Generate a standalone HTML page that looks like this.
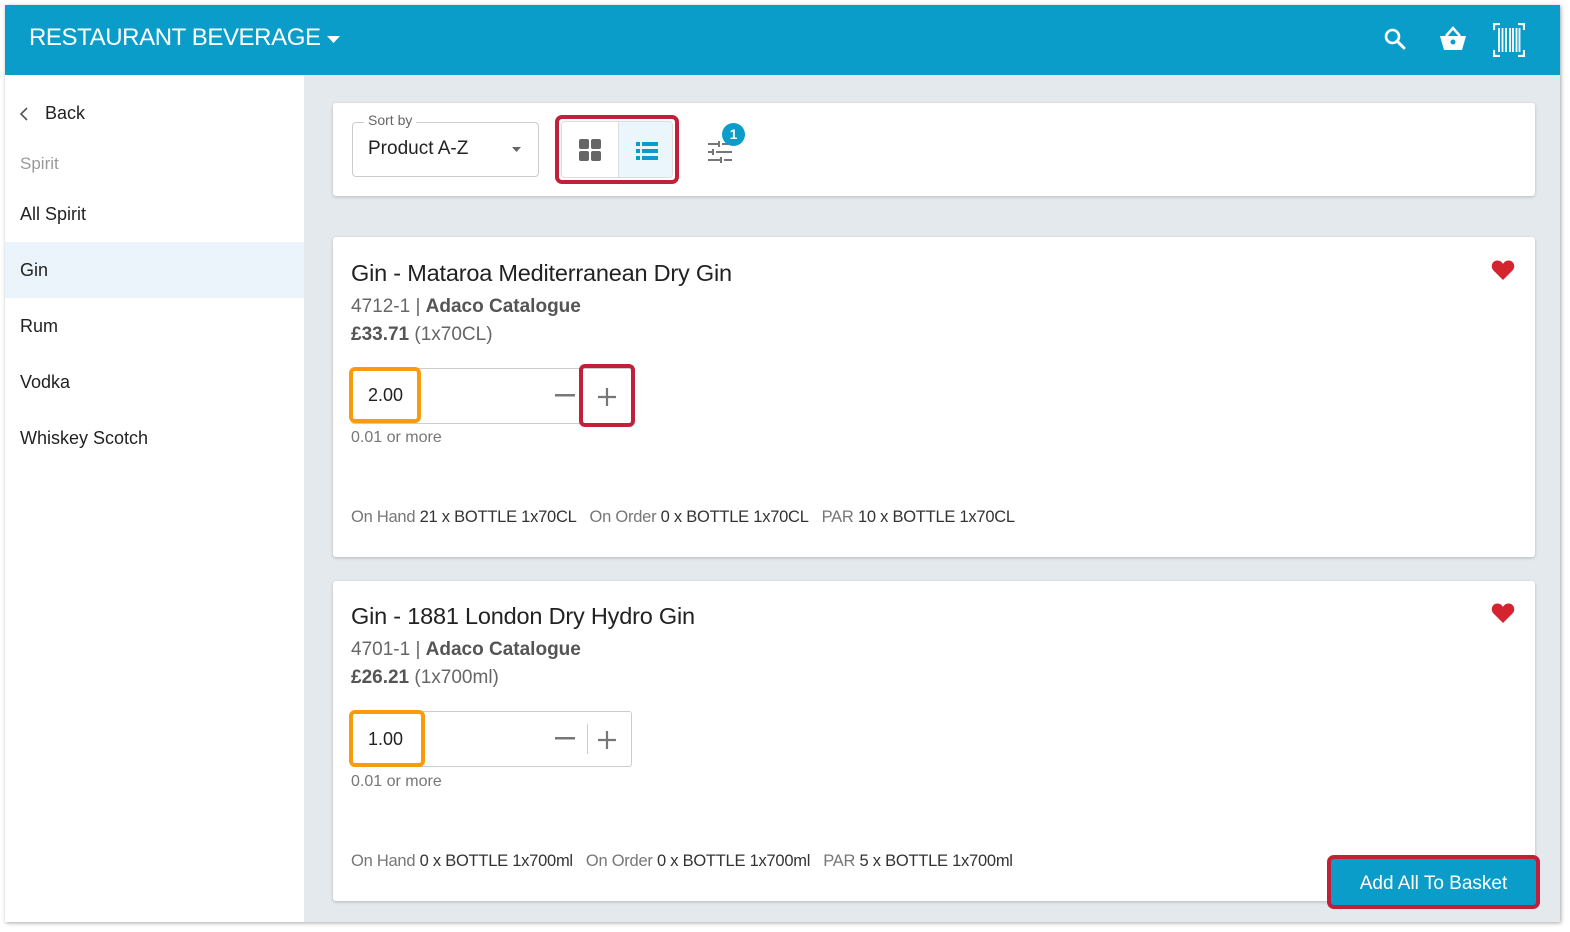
<!DOCTYPE html>
<html><head><meta charset="utf-8"><style>
*{box-sizing:border-box;margin:0;padding:0}
body{width:1570px;height:932px;background:#fff;font-family:"Liberation Sans",Arial,sans-serif;position:relative;overflow:hidden;color:#222}
.abs{position:absolute}
#frame{left:5px;top:5px;width:1555px;height:917px;background:#e4e9ed;box-shadow:1px 1px 4px rgba(0,0,0,.35);overflow:hidden}
#hdr{left:0;top:0;width:1555px;height:70px;background:#0b9dc9;color:#fff}
#side{left:0;top:70px;width:299px;height:847px;background:#fff}
.si{position:absolute;left:15px;font-size:18px;color:#222}
.card{position:absolute;background:#fff;border-radius:3px;box-shadow:0 1px 3px rgba(0,0,0,.2)}
.t{font-size:23.5px;color:#222;position:absolute;left:18px;letter-spacing:-0.2px}
.sub{font-size:19px;color:#666;position:absolute;left:18px}
.sub b{color:#555}
.qty{position:absolute;left:18px;width:281px;height:56px;border:1px solid #ccc;border-radius:3px}
.stock{position:absolute;left:18px;font-size:16.5px;color:#777;letter-spacing:-0.25px;white-space:nowrap}
.stock span{color:#333}
.hint{position:absolute;left:18px;font-size:16px;color:#777}
</style></head><body>
<div id="frame" class="abs">
 <div id="hdr" class="abs">
  <div class="abs" style="left:24px;top:19px;font-size:24px;letter-spacing:-0.4px;white-space:nowrap">RESTAURANT BEVERAGE</div>
  <svg class="abs" style="left:322px;top:31px" width="14" height="8"><path d="M0 0H13L6.5 7Z" fill="#fff"/></svg>
  <svg class="abs" style="left:1378px;top:22px" width="26" height="26" viewBox="0 0 26 26"><circle cx="9.5" cy="9.5" r="6.5" fill="none" stroke="#fff" stroke-width="2.6"/><path d="M14 14L21 21" stroke="#fff" stroke-width="3" stroke-linecap="round"/></svg>
  <svg class="abs" style="left:1433px;top:20px" width="30" height="28" viewBox="0 0 30 28"><path d="M8 11L15 3L22 11" fill="none" stroke="#fff" stroke-width="2.5"/><path d="M2 11H28L24 25H6Z" fill="#fff"/><circle cx="15" cy="17" r="2.5" fill="#0b9dc9"/></svg>
  <svg class="abs" style="left:1488px;top:18px" width="32" height="34" viewBox="0 0 32 34"><path d="M1 7V1H7M25 1H31V7M1 27V33H7M25 33H31V27" fill="none" stroke="#fff" stroke-width="2.2"/><path d="M6 5v24M9.5 5v24M13 5v24M17 5v24M20 5v24M23.5 5v24M26.5 5v24" stroke="#fff" stroke-width="1.8"/></svg>
 </div>
 <div id="side" class="abs">
  <svg class="abs" style="left:14px;top:31px" width="10" height="16"><path d="M8 2L2 8L8 14" fill="none" stroke="#555" stroke-width="1.6"/></svg>
  <div class="si" style="left:40px;top:28px">Back</div>
  <div class="si" style="top:79px;font-size:17px;color:#999">Spirit</div>
  <div class="si" style="top:129px">All Spirit</div>
  <div class="abs" style="left:0;top:167px;width:299px;height:56px;background:#eaf4fa"></div>
  <div class="si" style="top:185px">Gin</div>
  <div class="si" style="top:241px">Rum</div>
  <div class="si" style="top:297px">Vodka</div>
  <div class="si" style="top:353px">Whiskey Scotch</div>
 </div>
 <div class="card" style="left:328px;top:98px;width:1202px;height:93px">
  <div class="abs" style="left:19px;top:19px;width:187px;height:55px;border:1px solid #ccc;border-radius:4px"></div>
  <div class="abs" style="left:31px;top:9px;background:#fff;padding:0 4px;font-size:14px;color:#666">Sort by</div>
  <div class="abs" style="left:35px;top:35px;font-size:19px;color:#222">Product A-Z</div>
  <svg class="abs" style="left:179px;top:44px" width="10" height="6"><path d="M0 0H9L4.5 5Z" fill="#666"/></svg>
  <div class="abs" style="left:222px;top:12px;width:124px;height:69px;border:4px solid #c2203a;border-radius:7px"></div>
  <div class="abs" style="left:228px;top:18px;width:112px;height:57px;border:1px solid #ddd;border-radius:4px;overflow:hidden">
   <div class="abs" style="left:56px;top:0;width:56px;height:57px;background:#eaf5fc;border-left:1px solid #ddd"></div>
   <svg class="abs" style="left:17px;top:17px" width="22" height="22"><rect x="0" y="0" width="10" height="10" rx="2" fill="#666"/><rect x="12" y="0" width="10" height="10" rx="2" fill="#666"/><rect x="0" y="12" width="10" height="10" rx="2" fill="#666"/><rect x="12" y="12" width="10" height="10" rx="2" fill="#666"/></svg>
   <svg class="abs" style="left:74px;top:20px" width="22" height="18"><rect x="0" y="0" width="4" height="4" fill="#0b9dc9"/><rect x="6" y="0" width="16" height="4" fill="#0b9dc9"/><rect x="0" y="7" width="4" height="4" fill="#0b9dc9"/><rect x="6" y="7" width="16" height="4" fill="#0b9dc9"/><rect x="0" y="14" width="4" height="4" fill="#0b9dc9"/><rect x="6" y="14" width="16" height="4" fill="#0b9dc9"/></svg>
  </div>
  <svg class="abs" style="left:375px;top:38px" width="24" height="22"><path d="M0 3h10M14 3h10M11 0v6M0 11h4M8 11h16M5 8v6M0 19h12M16 19h8M13 16v6" stroke="#777" stroke-width="2"/></svg>
  <div class="abs" style="left:389px;top:20px;width:23px;height:23px;border-radius:50%;background:#0b9dc9;color:#fff;font-size:14px;font-weight:bold;text-align:center;line-height:23px">1</div>
 </div>

 <div class="card" style="left:328px;top:232px;width:1202px;height:320px">
  <div class="t" style="top:23px">Gin - Mataroa Mediterranean Dry Gin</div>
  <div class="sub" style="top:59px">4712-1 | <b>Adaco Catalogue</b></div>
  <div class="sub" style="top:87px"><b>£33.71</b> (1x70CL)</div>
  <div class="qty" style="top:131px"></div>
  <svg class="abs" style="left:222px;top:157px" width="20" height="4"><rect width="20" height="2.5" fill="#777"/></svg>
  <svg class="abs" style="left:264px;top:150px" width="20" height="20"><path d="M10 1v18M1 10h18" stroke="#777" stroke-width="2.2"/></svg>
  <div class="abs" style="left:16px;top:130px;width:72px;height:56px;border:4px solid #f99b0a;border-radius:6px"></div>
  <div class="abs" style="left:35px;top:148px;font-size:18px">2.00</div>
  <div class="abs" style="left:246px;top:127px;width:56px;height:63px;border:4px solid #c2203a;border-radius:6px"></div>
  <div class="hint" style="top:192px">0.01 or more</div>
  <div class="stock" style="top:271px">On Hand <span>21 x BOTTLE 1x70CL</span>&nbsp;&nbsp; On Order <span>0 x BOTTLE 1x70CL</span>&nbsp;&nbsp; PAR <span>10 x BOTTLE 1x70CL</span></div>
  <svg class="abs" style="left:1158px;top:22px" width="24" height="22" viewBox="0 0 24 22"><path d="M12 21L2.5 11.5C-1 8 1 1.5 6.5 1.5C9 1.5 11 3 12 5C13 3 15 1.5 17.5 1.5C23 1.5 25 8 21.5 11.5Z" fill="#d32430"/></svg>
 </div>

 <div class="card" style="left:328px;top:576px;width:1202px;height:320px">
  <div class="t" style="top:22px">Gin - 1881 London Dry Hydro Gin</div>
  <div class="sub" style="top:58px">4701-1 | <b>Adaco Catalogue</b></div>
  <div class="sub" style="top:86px"><b>£26.21</b> (1x700ml)</div>
  <div class="qty" style="top:130px"><div class="abs" style="left:235px;top:12px;width:1px;height:30px;background:#ccc"></div></div>
  <svg class="abs" style="left:222px;top:156px" width="20" height="4"><rect width="20" height="2.5" fill="#777"/></svg>
  <svg class="abs" style="left:264px;top:149px" width="20" height="20"><path d="M10 1v18M1 10h18" stroke="#777" stroke-width="2.2"/></svg>
  <div class="abs" style="left:16px;top:129px;width:76px;height:57px;border:4px solid #f99b0a;border-radius:6px"></div>
  <div class="abs" style="left:35px;top:148px;font-size:18px">1.00</div>
  <div class="hint" style="top:192px">0.01 or more</div>
  <div class="stock" style="top:271px">On Hand <span>0 x BOTTLE 1x700ml</span>&nbsp;&nbsp; On Order <span>0 x BOTTLE 1x700ml</span>&nbsp;&nbsp; PAR <span>5 x BOTTLE 1x700ml</span></div>
  <svg class="abs" style="left:1158px;top:21px" width="24" height="22" viewBox="0 0 24 22"><path d="M12 21L2.5 11.5C-1 8 1 1.5 6.5 1.5C9 1.5 11 3 12 5C13 3 15 1.5 17.5 1.5C23 1.5 25 8 21.5 11.5Z" fill="#d32430"/></svg>
 </div>

 <div class="abs" style="left:1322px;top:850px;width:213px;height:54px;border:4px solid #c2203a;border-radius:7px;background:#0b9dc9;color:#fff;font-size:19px;text-align:center;line-height:50px">Add All To Basket</div>
</div>
</body></html>
